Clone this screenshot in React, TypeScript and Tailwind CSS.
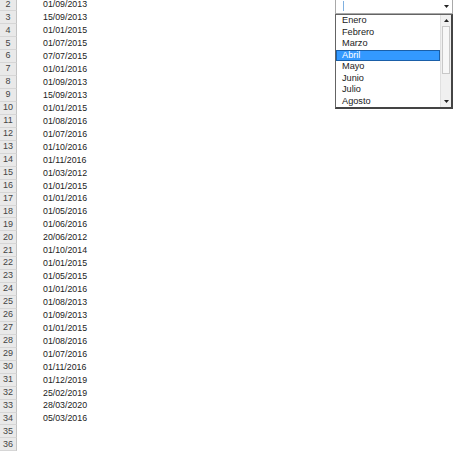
import React from "react";

const dates = [
  "01/09/2013", "15/09/2013", "01/01/2015", "01/07/2015", "07/07/2015",
  "01/01/2016", "01/09/2013", "15/09/2013", "01/01/2015", "01/08/2016",
  "01/07/2016", "01/10/2016", "01/11/2016", "01/03/2012", "01/01/2015",
  "01/01/2016", "01/05/2016", "01/06/2016", "20/06/2012", "01/10/2014",
  "01/01/2015", "01/05/2015", "01/01/2016", "01/08/2013", "01/09/2013",
  "01/01/2015", "01/08/2016", "01/07/2016", "01/11/2016", "01/12/2019",
  "25/02/2019", "28/03/2020", "05/03/2016", "", "",
];

const months = ["Enero", "Febrero", "Marzo", "Abril", "Mayo", "Junio", "Julio", "Agosto"];

function Arrow({ up }: { up?: boolean }) {
  return (
    <svg width="5" height="3" viewBox="0 0 5 3">
      <path d={up ? "M0 3 L2.5 0 L5 3 Z" : "M0 0 L5 0 L2.5 3 Z"} fill="#222" />
    </svg>
  );
}

export default function App() {
  return (
    <div
      className="relative w-[474px] h-[453px] overflow-hidden bg-white text-[8.8px] text-[#222]"
      style={{ fontFamily: "'Liberation Sans', Arial, sans-serif" }}
    >
      <div className="flex flex-col -mt-[1.5px]">
        {dates.map((d, i) => (
          <div key={i} className="flex h-[12.94px]">
            <div className="w-[17px] shrink-0 bg-[#e9e9e9] border-r border-[#c4c4c4] border-b border-b-[#d6d6d6] flex items-center justify-center text-[#444] text-[9px]">
              {i + 2}
            </div>
            <div className="pl-[26px] flex items-center">{d}</div>
          </div>
        ))}
      </div>

      {/* combo box */}
      <div className="absolute left-[335px] top-[-2px] w-[118px] h-[16px] bg-white border border-[#a9a9a9] flex items-center">
        <div className="ml-[7px] w-px h-[10px] bg-[#7fb0e0]" />
        <div className="flex-1" />
        <div className="w-[11px] h-full flex items-center justify-center">
          <Arrow />
        </div>
      </div>

      {/* list */}
      <div className="absolute left-[335px] top-[14px] w-[118px] h-[95px] bg-white border border-[#646464] border-r-2 border-b-2 border-r-[#444] border-b-[#444] flex text-[9.2px]">
        <div className="flex-1 flex flex-col">
          {months.map((m) => (
            <div
              key={m}
              className={`h-[11.6px] flex items-center leading-none ${
                m === "Abril" ? "bg-[#3399ff] text-white border border-[#1a5fa8] pl-[5px]" : "pl-[6px]"
              }`}
            >
              {m}
            </div>
          ))}
        </div>
        <div className="w-[11px] bg-[#f0f0f0] border-l border-[#e0e0e0] flex flex-col">
          <div className="h-[11px] flex items-center justify-center">
            <Arrow up />
          </div>
          <div className="mx-[1px] h-[48px] bg-[#f7f7f7] border border-[#c8c8c8]" />
          <div className="flex-1" />
          <div className="h-[11px] flex items-center justify-center">
            <Arrow />
          </div>
        </div>
      </div>
    </div>
  );
}
